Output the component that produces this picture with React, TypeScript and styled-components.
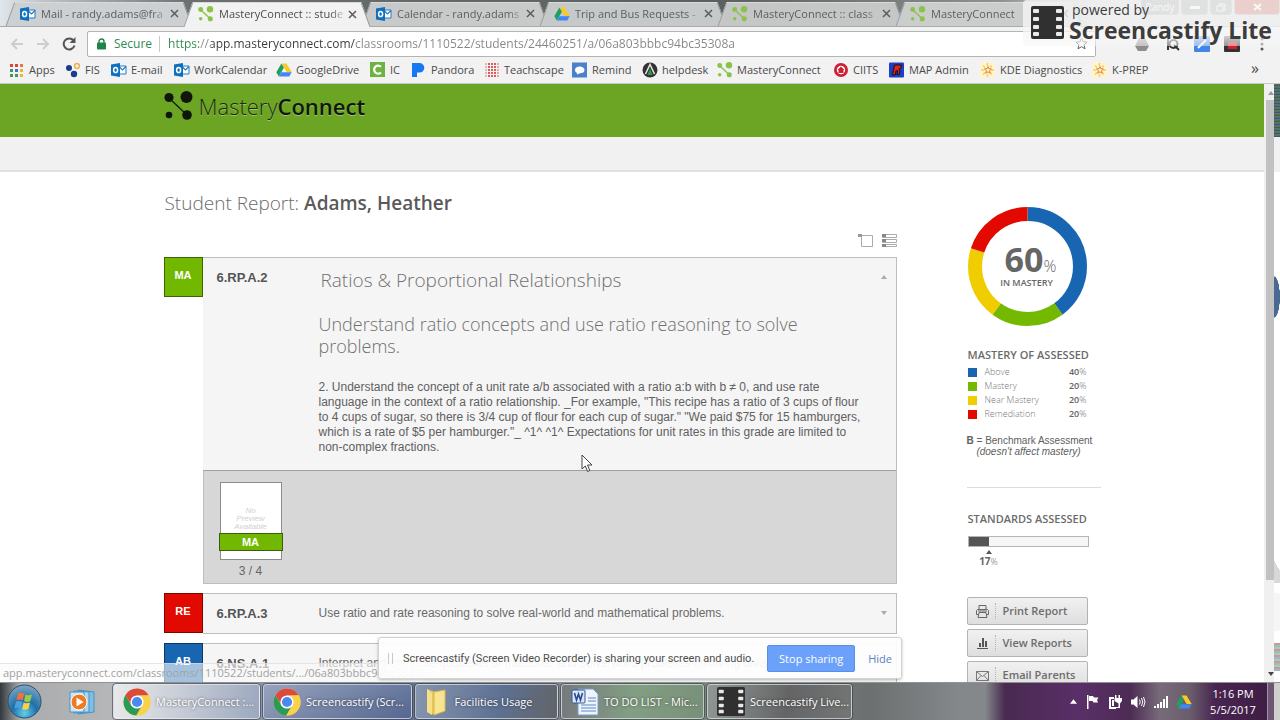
import React from "react";
import styled, { createGlobalStyle, css } from "styled-components";

const ui = `"Open Sans", "Noto Sans", sans-serif`;
const arial = `"Liberation Sans", Arial, sans-serif`;

const Global = createGlobalStyle`
  * { box-sizing: border-box; }
  body { margin: 0; font-family: ${ui}; overflow: hidden; }
  button { font: inherit; color: inherit; background: none; border: 0; padding: 0; margin: 0; cursor: pointer; }
  a { color: inherit; text-decoration: none; }
  svg { display: block; flex: none; }
  h1, h2, h3, p { margin: 0; font-weight: normal; }
`;

/* ---------- shell ---------- */
const Screen = styled.div`
  position: relative;
  display: flex;
  flex-direction: column;
  height: 100vh;
  overflow: hidden;
  background: #fff;
`;

/* ---------- tab strip ---------- */
const TabStrip = styled.div`
  display: flex;
  height: 27px;
  padding-left: 10px;
  background: linear-gradient(90deg, #dfe6ec 0, #c3c6c8 40px, #6b706f 190px, #59605e 720px, #8d9291 1000px, #d5d5d5 1100px);
  border-bottom: 1px solid #a9abab;
`;
const tabEdge = css`
  content: "";
  position: absolute;
  top: 2px;
  bottom: 0;
  width: 60%;
  z-index: -1;
`;
const TabBox = styled.div<{ $active?: boolean; $tint: string }>`
  position: relative;
  z-index: ${(p) => (p.$active ? 2 : 1)};
  display: flex;
  align-items: center;
  flex: 0 0 178px;
  min-width: 0;
  gap: 5px;
  height: ${(p) => (p.$active ? "27px" : "26px")};
  padding: 1px 9px 0 10px;
  color: ${(p) => (p.$active ? "#4c4c4c" : "#5b5e60")};
  isolation: isolate;
  &::before {
    ${tabEdge}
    left: 0;
    transform: skewX(-20deg);
    background: ${(p) => p.$tint};
    border-left: 1px solid #9b9d9e;
    border-top: 1px solid #d9dbdb;
  }
  &::after {
    ${tabEdge}
    right: 0;
    transform: skewX(20deg);
    background: ${(p) => p.$tint};
    border-right: 1px solid #8f9192;
    border-top: 1px solid #d9dbdb;
  }
`;
const TabTitle = styled.button`
  flex: 1;
  min-width: 0;
  overflow: hidden;
  white-space: nowrap;
  text-align: left;
  font-size: 11px;
  line-height: 18px;
  mask-image: linear-gradient(90deg, #000 90%, rgba(0, 0, 0, 0.25));
`;
const CloseButton = styled.button`
  padding: 3px 0;
`;
const WindowControls = styled.div`
  display: flex;
  align-items: flex-start;
  gap: 2px;
  margin-left: auto;
`;
const WindowButton = styled.button<{ $w: number; $close?: boolean }>`
  display: flex;
  align-items: center;
  justify-content: center;
  width: ${(p) => p.$w}px;
  height: 15px;
  color: #fff;
  font-size: 10px;
  border: 1px solid #a5a5a5;
  border-top: 0;
  border-radius: 0 0 4px 4px;
  background: ${(p) => (p.$close ? "#c4453a" : "#8f9393")};
`;

/* ---------- toolbar ---------- */
const Toolbar = styled.div`
  display: flex;
  align-items: center;
  height: 31px;
  padding: 2px 8px 0 4px;
  background: #f2f2f2;
`;
const NavButton = styled.button`
  display: flex;
  width: 26px;
  justify-content: center;
`;
const Omnibox = styled.label`
  display: flex;
  align-items: center;
  flex: 1;
  height: 26px;
  margin-left: 5px;
  padding: 0 7px 0 9px;
  background: #fff;
  border: 1px solid #b4b4b4;
  border-radius: 2px;
`;
const Secure = styled.span`
  padding: 0 7px 0 8px;
  margin-right: 8px;
  border-right: 1px solid #c8c8c8;
  color: #2f8a52;
  font-size: 12px;
  line-height: 16px;
`;
const UrlInput = styled.input`
  flex: 1;
  min-width: 0;
  padding: 0;
  border: 0;
  outline: 0;
  font: 12px/18px ${ui};
  color: #777;
  background: linear-gradient(90deg, #2f8a52 0 31px, #8b8b8b 31px 43px, #3a3a3a 43px 187px, #858585 187px);
  background-clip: text;
  -webkit-background-clip: text;
  -webkit-text-fill-color: transparent;
`;
const Extensions = styled.div`
  display: flex;
  gap: 14px;
  padding-left: 38px;
  width: 176px;
`;

/* ---------- bookmarks ---------- */
const Bookmarks = styled.nav`
  display: flex;
  align-items: center;
  height: 26px;
  padding: 0 0 2px 9px;
  background: #f2f2f2;
  border-bottom: 1px solid #c9c9c9;
  font-size: 11px;
  color: #4a4a4a;
`;
const Bookmark = styled.a<{ $w: number }>`
  display: flex;
  align-items: center;
  gap: 4px;
  flex: 0 0 ${(p) => p.$w}px;
  white-space: nowrap;
`;
const MoreButton = styled.button`
  margin: 0 21px 3px auto;
  font-size: 16px;
  line-height: 16px;
`;

/* ---------- recorder watermark ---------- */
const Watermark = styled.div`
  position: absolute;
  z-index: 5;
  top: 0;
  right: 0;
  display: flex;
  align-items: flex-start;
  gap: 5px;
  width: 257px;
  height: 46px;
  padding: 0 0 0 8px;
  overflow: hidden;
  background: linear-gradient(rgba(246, 246, 246, 0.78) 80%, rgba(246, 246, 246, 0.5));
  border-radius: 4px 0 0 4px;
  color: #3c3c3c;
  white-space: nowrap;
`;
const WatermarkIcon = styled.div`
  padding-top: 6px;
`;
const WatermarkText = styled.div`
  padding-left: 3px;
  font-size: 14px;
  line-height: 20px;
`;
const WatermarkName = styled.strong`
  display: block;
  margin-left: -3px;
  font-size: 23px;
`;

/* ---------- page ---------- */
const Viewport = styled.div`
  position: relative;
  display: flex;
  flex: 1;
  min-height: 0;
  overflow: hidden;
`;
const Page = styled.div`
  flex: 1;
  min-width: 0;
  overflow: hidden;
  background: #fff;
`;
const Container = styled.div`
  max-width: 937px;
  margin: 0 auto;
`;
const Header = styled.header`
  height: 53px;
  padding-top: 7px;
  background: #6ca424;
`;
const Brand = styled.a`
  display: flex;
  align-items: center;
  gap: 5px;
  font-family: ${ui};
  font-size: 22px;
  line-height: 30px;
  font-weight: 300;
  color: #1c2b0c;
  text-shadow: 0 1px 0 rgba(255, 255, 255, 0.35);
  b { font-weight: 600; color: #10170a; }
`;
const SubBar = styled.div`
  height: 35px;
  background: #f1f1f1;
  border-bottom: 2px solid #e0e0e0;
`;
const Columns = styled(Container)`
  display: flex;
  gap: 70px;
`;
const Main = styled.main`
  flex: 1;
  min-width: 0;
`;
const Aside = styled.aside`
  flex: 0 0 134px;
  padding-top: 35px;
  color: #666;
`;
const ReportTitle = styled.h1`
  padding: 18px 0 0 1px;
  font-size: 19px;
  line-height: 26px;
  font-weight: 300;
  color: #6b6b6b;
  b { font-weight: 600; color: #5a5a5a; }
`;
const ViewSwitch = styled.div`
  display: flex;
  justify-content: flex-end;
  gap: 9px;
  padding: 17px 0 9px;
`;
const Standards = styled.div`
  display: flex;
  flex-direction: column;
  gap: 9px;
`;
const Standard = styled.section`
  display: flex;
  align-items: flex-start;
  font-family: ${arial};
`;
const Level = styled.div<{ $color: string }>`
  flex: 0 0 39px;
  height: 40px;
  background: ${(p) => p.$color};
  border: 1px solid rgba(0, 0, 0, 0.45);
  color: #fff;
  font-size: 11px;
  font-weight: 700;
  line-height: 35px;
  text-align: center;
`;
const Panel = styled.div`
  flex: 1;
  min-width: 0;
  background: #f5f5f5;
  border: 1px solid #bdbdbd;
  border-left: 0;
`;
const PanelHead = styled.div`
  display: grid;
  grid-template-columns: 102px 1fr 16px;
  padding: 0 4px 0 14px;
  min-height: 38px;
`;
const Code = styled.strong`
  font-size: 13px;
  line-height: 39px;
  color: #555;
`;
const Summary = styled.p`
  font-size: 12px;
  line-height: 39px;
  color: #6a6a6a;
  white-space: nowrap;
  overflow: hidden;
`;
const Toggle = styled.button`
  display: flex;
  justify-content: center;
  height: 38px;
  align-items: center;
`;
const Detail = styled.div`
  padding: 10px 0 15px;
`;
const Domain = styled.h2`
  padding-left: 2px;
  font: 300 19px/24px ${ui};
  color: #707070;
`;
const Cluster = styled.h3`
  margin: 21px 0 23px;
  font: 300 18px/22px ${ui};
  color: #707070;
`;
const Statement = styled.p`
  max-width: 550px;
  font-size: 12px;
  line-height: 15px;
  color: #606060;
`;
const Assessments = styled.div`
  padding: 11px 0 2px 16px;
  background: #d7d7d7;
  border-top: 1px solid #9f9f9f;
  border-left: 1px solid #bdbdbd;
`;
const Assessment = styled.a`
  display: block;
  width: 62px;
  text-align: center;
`;
const Thumb = styled.span`
  display: block;
  height: 78px;
  padding-top: 24px;
  background: #fff;
  border: 1px solid #8c8c8c;
  font-size: 8px;
  line-height: 8px;
  font-style: italic;
  color: #d0d0d0;
`;
const ThumbLevel = styled.span`
  display: block;
  margin: 2px -2px 0;
  border: 1px solid #3c5a10;
  background: #72b800;
  color: #fff;
  font: 700 11px/16px ${arial};
`;
const Score = styled.span`
  display: block;
  padding-top: 1px;
  font-size: 12px;
  line-height: 20px;
  color: #666;
`;

/* ---------- sidebar ---------- */
const Donut = styled.div`
  position: relative;
  width: 120px;
`;
const DonutLabel = styled.div`
  position: absolute;
  inset: 34px 0 auto 0;
  text-align: center;
  font-size: 9px;
  line-height: 12px;
  font-weight: 600;
`;
const DonutValue = styled.div`
  margin-bottom: -7px;
  padding-left: 8px;
  font-size: 34px;
  line-height: 36px;
  font-weight: 700;
  span { font-size: 16px; font-weight: 300; }
`;
const AsideTitle = styled.h3`
  padding-left: 1px;
  font-size: 11px;
  line-height: 16px;
  font-weight: 600;
  color: #6b6b6b;
  white-space: nowrap;
`;
const LegendTitle = styled(AsideTitle)`
  margin-top: 20px;
`;
const Legend = styled.table`
  width: 119px;
  margin: 2px 0 0 1px;
  border-collapse: collapse;
  font-size: 9px;
  line-height: 14px;
  td, th { padding: 0; }
  th { text-align: left; font-weight: 300; color: #777; }
  td:first-child { width: 17px; }
  td:last-child { text-align: right; font-weight: 300; }
  b { font-weight: 600; }
`;
const Swatch = styled.span<{ $color: string }>`
  display: block;
  width: 9px;
  height: 9px;
  background: ${(p) => p.$color};
`;
const Note = styled.p`
  margin: 14px 0 30px;
  width: 124px;
  text-align: center;
  white-space: nowrap;
  font: 10px/11px ${arial};
  color: #606060;
`;
const Divider = styled.hr`
  margin: 0 0 23px;
  border: 0;
  border-top: 1px solid #dcdcdc;
`;
const Bar = styled.div`
  width: 121px;
  height: 11px;
  margin: 9px 0 2px 1px;
  background: #f6f6f6;
  border: 1px solid #b5b5b5;
`;
const BarFill = styled.div`
  height: 100%;
  background: #555;
`;
const BarMark = styled.div`
  display: flex;
  flex-direction: column;
  align-items: center;
  width: 44px;
  padding-top: 1px;
  font-size: 10px;
  line-height: 14px;
  span { font-weight: 300; font-size: 9px; }
`;
const Actions = styled.div`
  display: flex;
  flex-direction: column;
  gap: 4px;
  width: 121px;
  margin-top: 28px;
`;
const ActionButton = styled.button`
  display: flex;
  align-items: center;
  height: 28px;
  padding-left: 7px;
  border: 1px solid #b3b3b3;
  border-radius: 2px;
  background: linear-gradient(#f1f1f1, #dedede);
  font-size: 11px;
  font-weight: 600;
  color: #6d6d6d;
`;
const ActionText = styled.span`
  margin-left: 5px;
  padding-left: 7px;
  border-left: 1px dotted #b5b5b5;
  line-height: 16px;
`;

/* ---------- scrollbar and second display ---------- */
const Scrollbar = styled.div`
  display: flex;
  flex-direction: column;
  align-items: flex-end;
  justify-content: space-between;
  flex: 0 0 10px;
  padding: 7px 0 6px;
  background: #f0f0f0;
`;
const ScrollThumb = styled.div`
  flex: 0 1 82%;
  width: 8px;
  margin: 5px 0 auto;
  background: #c1c1c1;
`;
const NextScreen = styled.div`
  flex: 0 0 6px;
  display: flex;
  flex-direction: column;
  background: #fff;
`;
const Slice = styled.div<{ $h: number; $bg?: string }>`
  flex: 0 0 ${(p) => p.$h}px;
  background: ${(p) => p.$bg || "transparent"};
`;

/* ---------- overlays ---------- */
const StatusBubble = styled.div`
  position: absolute;
  left: 0;
  bottom: 0;
  width: 425px;
  height: 19px;
  padding-left: 3px;
  overflow: hidden;
  white-space: nowrap;
  background: rgba(250, 250, 250, 0.62);
  border-top: 1px solid rgba(220, 220, 220, 0.7);
  font-size: 11px;
  line-height: 18px;
  color: #a2a2a2;
`;
const SharePopup = styled.div`
  position: absolute;
  left: 50%;
  bottom: 3px;
  transform: translateX(-50%);
  display: flex;
  align-items: center;
  width: 524px;
  height: 42px;
  padding: 0 9px;
  background: rgba(253, 253, 253, 0.94);
  border: 1px solid #d2d2d2;
  border-radius: 3px;
  box-shadow: 0 1px 3px rgba(0, 0, 0, 0.25);
  font-size: 11px;
  color: #4d4d4d;
  white-space: nowrap;
`;
const Grip = styled.span`
  width: 5px;
  height: 11px;
  margin-right: 10px;
  border: solid #c8c8c8;
  border-width: 0 1px;
`;
const ShareText = styled.span`
  font-family: Roboto, ${ui};
`;
const StopButton = styled.button`
  width: 88px;
  height: 27px;
  margin-left: auto;
  background: #6ba1fa;
  border: 1px solid #5b8de0;
  border-radius: 2px;
  color: #fff;
`;
const HideLink = styled.button`
  margin-left: 13px;
  color: #5f7fc4;
`;
const Pointer = styled.div`
  position: absolute;
  z-index: 6;
  left: 581px;
  top: 454px;
`;

/* ---------- taskbar ---------- */
const Taskbar = styled.footer`
  display: flex;
  align-items: center;
  flex: 0 0 38px;
  padding-left: 7px;
  border-top: 1px solid #8f9193;
  color: #fff;
  font-size: 11px;
  background: linear-gradient(90deg, #33373b 0, #a9abad 20px, #b4b6b8 110px, #8b93a6 260px, #63718f 420px, #7d848c 560px, #7c8e7c 640px, #76807a 760px, #6d7071 870px, #85888a 960px, #85888a 985px, #482a50 1005px, #5a2f68 1080px, #4c2c54 1130px, #776b79 1160px, #6a5d6c 1190px, #482550 1215px, #3c1c42 100%);
`;
const TaskSlot = styled.button<{ $ml?: number }>`
  margin-left: ${(p) => p.$ml || 0}px;
`;
const TaskButtons = styled.div`
  display: flex;
  gap: 3px;
  margin-left: 18px;
`;
const TaskButton = styled.button<{ $w: number; $bg: string }>`
  display: flex;
  align-items: center;
  gap: 5px;
  width: ${(p) => p.$w}px;
  height: 35px;
  padding-left: 9px;
  border: 1px solid rgba(235, 240, 245, 0.65);
  border-radius: 3px;
  outline: 1px solid rgba(40, 45, 55, 0.5);
  background: ${(p) => p.$bg};
  white-space: nowrap;
  text-shadow: 0 0 3px rgba(0, 0, 0, 0.6);
`;
const TaskLabel = styled.span<{ $center?: boolean }>`
  flex: 1;
  padding-right: ${(p) => (p.$center ? "22px" : "0")};
  text-align: ${(p) => (p.$center ? "center" : "left")};
`;
const Tray = styled.div`
  display: flex;
  align-items: center;
  gap: 7px;
  margin-left: auto;
`;
const Clock = styled.time`
  width: 68px;
  margin-right: -7px;
  text-align: center;
  font-size: 11px;
  line-height: 16px;
`;
const ShowDesktop = styled.button`
  width: 13px;
  height: 37px;
  border-left: 1px solid #a492a8;
  background: linear-gradient(90deg, rgba(255, 255, 255, 0.25) 6px, #cfcfcf 6px);
`;

/* ---------- drawings ---------- */
const Outlook = () => (
  <svg width="16" height="16" viewBox="0 0 16 16">
    <path d="M8 4h7v8H8z" fill="#fff" stroke="#1e7ac8" />
    <path d="M8.500 5l3 3 3.500-3.500" fill="none" stroke="#1e7ac8" strokeWidth="1.200" />
    <path d="M0 2.500L9 1v14L0 13.500z" fill="#0f6fc0" />
    <ellipse cx="4.600" cy="8" rx="2" ry="2.600" fill="none" stroke="#fff" strokeWidth="1.500" />
  </svg>
);
const Mastery = ({ size = 16, color = "#8cc24a" }) => (
  <svg width={size} height={size} viewBox="0 0 30 30" fill={color}>
    <path d="M5 7l18 17" stroke={color} strokeWidth={size > 20 ? 1.2 : 2.5} />
    <circle cx="5" cy="6.500" r="4.600" />
    <circle cx="22.500" cy="6" r="6" />
    <circle cx="5" cy="24" r="3.300" />
    <circle cx="23" cy="24" r="4.800" />
  </svg>
);
const Drive = () => (
  <svg width="16" height="16" viewBox="0 0 16 16">
    <path d="M5.500 1.500h5L15.700 10h-5z" fill="#fbc926" />
    <path d="M5.400 1.600L.3 10.200l2.500 4.300 5.100-8.700z" fill="#1fa15d" />
    <path d="M5.400 10.300h10.300l-2.500 4.200H2.900z" fill="#4285f4" />
  </svg>
);
const AppsGrid = () => (
  <svg width="16" height="16" viewBox="0 0 16 16">
    {["#d9453b", "#d9453b", "#e0793b", "#3a9a57", "#3f74c9", "#e8b53a", "#3a9a57", "#3a9a57", "#e8b53a"].map((c, i) => (
      <rect key={i} x={1 + (i % 3) * 5} y={2 + Math.floor(i / 3) * 5} width="3" height="3" fill={c} />
    ))}
  </svg>
);
const Fis = () => (
  <svg width="16" height="16" viewBox="0 0 16 16" fill="#1a3c8f">
    <circle cx="4" cy="6" r="3" />
    <circle cx="9" cy="12" r="3.200" />
    <circle cx="12" cy="4" r="2.400" fill="none" stroke="#eeb04a" strokeWidth="1.500" />
  </svg>
);
const Campus = () => (
  <svg width="16" height="16" viewBox="0 0 16 16">
    <rect width="15" height="15" fill="#6cb33f" />
    <path d="M11 4.800a4 4 0 1 0 0 5.600" fill="none" stroke="#fff" strokeWidth="2.200" />
  </svg>
);
const Pandora = () => (
  <svg width="16" height="16" viewBox="0 0 16 16">
    <path d="M1 1h7.500a4.700 4.700 0 0 1 0 9.600H6V15H1z" fill="#1779f2" />
  </svg>
);
const Teach = () => (
  <svg width="16" height="16" viewBox="0 0 16 16">
    {Array.from({ length: 25 }, (_, i) => (
      <rect key={i} x={1 + (i % 5) * 3} y={1 + Math.floor(i / 5) * 3} width="2" height="2" fill="#d94b4b" opacity={i % 5 === 0 ? 0.35 : i % 5 === 4 ? 0.45 : 0.9} />
    ))}
  </svg>
);
const Remind = () => (
  <svg width="16" height="16" viewBox="0 0 16 16">
    <rect width="15" height="15" y=".5" fill="#4a80cc" />
    <path d="M3 8c0-2.200 2-3.500 4.500-3.500S12.500 5.800 12.500 8s-2 3.300-4.500 3.300L5 12.500V11C3.800 10.400 3 9.500 3 8z" fill="#fff" />
  </svg>
);
const Helpdesk = () => (
  <svg width="16" height="16" viewBox="0 0 16 16">
    <circle cx="8" cy="8" r="7.500" fill="#333" />
    <path d="M3.500 12L8 2.500 12.500 12" fill="none" stroke="#e8e8e8" strokeWidth="1.500" />
    <path d="M8 6l2.500 7h-5z" fill="#2f9a4c" />
  </svg>
);
const Ciits = () => (
  <svg width="16" height="16" viewBox="0 0 16 16">
    <circle cx="8" cy="8" r="5.600" fill="#fff" stroke="#d01f35" strokeWidth="2.800" />
    <path d="M8 4.500l3.500 3.500H10.500v3h-5V8h-1z" fill="#d01f35" />
  </svg>
);
const MapAdmin = () => (
  <svg width="16" height="16" viewBox="0 0 16 16">
    <rect width="15" height="15" y=".5" rx="1" fill="#1d3fc4" />
    <path d="M5.500 3h7l-.7 3.200-2 1.300 1.200 1-.8 4H8l.7-3.700H7L6.300 13H3.500z" fill="#e2231a" stroke="#111" />
  </svg>
);
const Kde = () => (
  <svg width="16" height="16" viewBox="0 0 16 16">
    <rect width="15" height="15" y=".5" fill="#fdf5cf" />
    <path d="M7.500 1v3M7.500 12v3M1 8h3M11 8h3M3 3.500l2 2M12 3.500l-2 2M3 12.500l2-2M12 12.500l-2-2" stroke="#f3cf55" strokeWidth="1.500" />
    <path d="M8 4.500l1 2.300 2.500.2-2 1.700.7 2.500L8 9.800l-2.300 1.400.7-2.500-2-1.700 2.600-.2z" fill="#fdf5cf" stroke="#e0813a" />
  </svg>
);
const Cross = () => (
  <svg width="9" height="9" viewBox="0 0 9 9" stroke="#5c5c5c" strokeWidth="1.500">
    <path d="M1 1l7 7M8 1L1 8" />
  </svg>
);
const Film = ({ w = 33, h = 33 }) => (
  <svg width={w} height={h} viewBox="0 0 33 33" preserveAspectRatio="none">
    <rect width="33" height="33" rx="2" fill="#303030" />
    {[3, 11, 19, 26].map((y) => (
      <g key={y} fill="#e9e9e9">
        <rect x="2" y={y} width="6" height="4" rx="1" />
        <rect x="25" y={y} width="6" height="4" rx="1" />
      </g>
    ))}
  </svg>
);
const Chrome = () => (
  <svg width="28" height="28" viewBox="0 0 28 28">
    <circle cx="14" cy="14" r="13.500" fill="#fcd14a" />
    <path d="M2.300 7.300A13.500 13.500 0 0 1 25.700 7.300L14 7.800 9 17.500z" fill="#dc4a3d" />
    <path d="M2.300 7.200A13.500 13.500 0 0 0 13.300 27.500L19.600 17 8.600 17.500z" fill="#2a9a55" />
    <path d="M14 7.500h11.800A13.500 13.500 0 0 1 13.300 27.500L19.500 17z" fill="#fcd14a" />
    <circle cx="14" cy="14" r="6.600" fill="#fff" />
    <circle cx="14" cy="14" r="5.100" fill="#4a8af0" />
  </svg>
);
const StartOrb = () => (
  <svg width="35" height="35" viewBox="0 0 35 35">
    <defs>
      <radialGradient id="orb" cx=".5" cy=".85" r=".85">
        <stop offset="0" stopColor="#5fd0ee" />
        <stop offset=".45" stopColor="#1f6fa8" />
        <stop offset="1" stopColor="#7fa8c4" />
      </radialGradient>
    </defs>
    <circle cx="17.500" cy="17.500" r="16.500" fill="url(#orb)" stroke="#2f4f68" />
    <path d="M11 9.500c2.200-1 4.200-.9 6.200.2l-1.500 6.600c-2-1.100-4-1.200-6.300-.2z" fill="#f0713a" />
    <path d="M18.500 10.500c2.200 1.100 4.200 1.100 6.500.1l-1.700 6.600c-2.200 1-4.200.9-6.300-.2z" fill="#9ccb46" />
    <path d="M9 17.600c2.200-1 4.200-.9 6.300.2l-1.600 6.500c-2-1.100-4-1.200-6.300-.2z" fill="#4fa0e0" />
    <path d="M16.600 18.500c2.100 1.100 4.200 1.100 6.400.1l-1.600 6.500c-2.200 1-4.200.9-6.300-.2z" fill="#fbd045" />
  </svg>
);
const MediaPlayer = () => (
  <svg width="26" height="26" viewBox="0 0 26 26">
    <path d="M9 1l16 2v20L9 25z" fill="#7fbfe6" stroke="#4a90c0" />
    <path d="M5 2l15 1v20L5 24z" fill="#a9d8f2" stroke="#4a90c0" />
    <path d="M1 3h14v20H1z" fill="#c5e6f7" stroke="#4a90c0" />
    <circle cx="10" cy="13" r="8" fill="#ef7a22" stroke="#fff" />
    <path d="M7.500 8.500l7 4.500-7 4.500z" fill="#fff" />
  </svg>
);
const Folder = () => (
  <svg width="22" height="30" viewBox="0 0 22 30">
    <path d="M2 2l8 3v23L2 25z" fill="#e6c75c" />
    <path d="M9 5l11-2v21L9 28z" fill="#f8e491" stroke="#d9b84a" />
    <path d="M2 2l5 4v22l-5-3z" fill="#f6df86" />
  </svg>
);
const Word = () => (
  <svg width="28" height="28" viewBox="0 0 28 28">
    <path d="M7 1h15l5 5v21H7z" fill="#eef4fc" stroke="#7b9ccc" />
    <path d="M17 10h8M17 13h8M10 17h15M10 20h15M10 23h15" stroke="#5f87c4" />
    <rect x="1" y="2" width="13" height="13" rx="1" fill="#dbe7f7" stroke="#36589b" />
    <path d="M3.500 5l2 7 2-6 2 6 2-7" fill="none" stroke="#274a90" strokeWidth="1.600" />
  </svg>
);
const Triangle = ({ down, color = "#aaa", size = 6 }: { down?: boolean; color?: string; size?: number }) => (
  <svg width={size} height={size - 2} viewBox="0 0 6 4" fill={color}>
    <path d={down ? "M0 0h6L3 4z" : "M0 4h6L3 0z"} />
  </svg>
);
const Printer = () => (
  <svg width="15" height="13" viewBox="0 0 15 13" fill="none" stroke="#666">
    <path d="M4 4V.5h7V4M3.500 9.500h-2v-4l1-1h10l1 1v4h-2M4 7.500h7l1 5H3zM3 6h9" />
  </svg>
);
const Chart = () => (
  <svg width="15" height="13" viewBox="0 0 15 13" stroke="#555">
    <path d="M2 11.500h11" />
    <path d="M5 10V6M8 10V1M11 10V4" strokeWidth="2" />
  </svg>
);
const Envelope = () => (
  <svg width="15" height="13" viewBox="0 0 15 13" fill="none" stroke="#777">
    <path d="M1.500 2.500h12v9h-12zM1.500 2.500l6 5 6-5M1.500 11.500L6 6.500M13.500 11.500L9 6.500" />
  </svg>
);

/* ---------- data ---------- */
const tabs = [
  { title: "Mail - randy.adams@fra", icon: <Outlook />, tint: "#cdd0d2" },
  { title: "MasteryConnect :: stude", icon: <Mastery />, tint: "#f2f2f2", active: true },
  { title: "Calendar - randy.adams", icon: <Outlook />, tint: "#c8caca" },
  { title: "Trip and Bus Requests -", icon: <Drive />, tint: "#c6c9c9" },
  { title: "MasteryConnect :: class", icon: <Mastery />, tint: "#c4c7c6" },
  { title: "MasteryConnect", icon: <Mastery />, tint: "#cbcdcd" },
];
const bookmarks = [
  { label: "Apps", w: 56, icon: <AppsGrid /> },
  { label: "FIS", w: 46, icon: <Fis /> },
  { label: "E-mail", w: 63, icon: <Outlook /> },
  { label: "WorkCalendar", w: 102, icon: <Outlook /> },
  { label: "GoogleDrive", w: 94, icon: <Drive /> },
  { label: "IC", w: 41, icon: <Campus /> },
  { label: "Pandora", w: 73, icon: <Pandora /> },
  { label: "Teachscape", w: 88, icon: <Teach /> },
  { label: "Remind", w: 70, icon: <Remind /> },
  { label: "helpdesk", w: 75, icon: <Helpdesk /> },
  { label: "MasteryConnect", w: 116, icon: <Mastery /> },
  { label: "CIITS", w: 56, icon: <Ciits /> },
  { label: "MAP Admin", w: 91, icon: <MapAdmin /> },
  { label: "KDE Diagnostics", w: 112, icon: <Kde /> },
  { label: "K-PREP", w: 60, icon: <Kde /> },
];
const levels = [
  { name: "Above", value: 40, color: "#1866b2" },
  { name: "Mastery", value: 20, color: "#74b800" },
  { name: "Near Mastery", value: 20, color: "#f0cd00" },
  { name: "Remediation", value: 20, color: "#e20a00" },
];
const offsetOf = (i: number) => levels.slice(0, i).reduce((sum, l) => sum + l.value, 0);

const Row = ({ level, color, code, text }: { level: string; color: string; code: string; text: string }) => (
  <Standard>
    <Level $color={color}>{level}</Level>
    <Panel>
      <PanelHead>
        <Code>{code}</Code>
        <Summary>{text}</Summary>
        <Toggle aria-label={`Expand ${code}`}><Triangle down /></Toggle>
      </PanelHead>
    </Panel>
  </Standard>
);

export default function App() {
  return (
    <Screen>
      <Global />
      <TabStrip>
        {tabs.map((t, i) => (
          <TabBox key={i} $active={t.active} $tint={t.tint}>
            {t.icon}
            <TabTitle>{t.title}</TabTitle>
            <CloseButton aria-label="Close tab"><Cross /></CloseButton>
          </TabBox>
        ))}
        <WindowControls>
          <WindowButton $w={38}>Randy</WindowButton>
          <WindowButton $w={27} aria-label="Minimize">
            <svg width="10" height="3"><rect width="10" height="3" fill="#fff" /></svg>
          </WindowButton>
          <WindowButton $w={22} aria-label="Restore">
            <svg width="10" height="9" fill="none" stroke="#fff"><path d="M3 3V1h6v6H7M1 3h6v5H1z" /></svg>
          </WindowButton>
          <WindowButton $w={46} $close aria-label="Close">
            <svg width="9" height="8" stroke="#fff" strokeWidth="2"><path d="M1 1l7 6M8 1L1 7" /></svg>
          </WindowButton>
        </WindowControls>
      </TabStrip>

      <Toolbar>
        <NavButton aria-label="Back">
          <svg width="14" height="14" fill="none" stroke="#cdcdcd" strokeWidth="2"><path d="M13 7H2M7 2L2 7l5 5" /></svg>
        </NavButton>
        <NavButton aria-label="Forward">
          <svg width="14" height="14" fill="none" stroke="#cdcdcd" strokeWidth="2"><path d="M1 7h11M7 2l5 5-5 5" /></svg>
        </NavButton>
        <NavButton aria-label="Reload">
          <svg width="14" height="14" fill="none" stroke="#555" strokeWidth="2">
            <path d="M11.500 3.500A5.500 5.500 0 1 0 12.500 8.500" />
            <path d="M13.500 0v6h-6z" fill="#555" stroke="none" />
          </svg>
        </NavButton>
        <Omnibox>
          <svg width="9" height="12" viewBox="0 0 9 12">
            <path d="M2 5V3.500a2.500 2.500 0 0 1 5 0V5" fill="none" stroke="#1f8447" strokeWidth="1.400" />
            <rect y="4.500" width="9" height="7" rx="1" fill="#1f8447" />
          </svg>
          <Secure>Secure</Secure>
          <UrlInput
            aria-label="Address"
            defaultValue="https://app.masteryconnect.com/classrooms/1110522/students/24460251/a/06a803bbbc94bc35308a"
          />
          <svg width="13" height="13" viewBox="0 0 13 13" fill="none" stroke="#666">
            <path d="M6.500 1l1.600 3.700 4 .4-3 2.700.9 4-3.500-2.100L3 11.800l.9-4-3-2.700 4-.4z" />
          </svg>
        </Omnibox>
        <Extensions>
          <svg width="16" height="16"><path d="M5 2h6l4 8-3 5H4l-3-5z" fill="#8d8d8d" /></svg>
          <svg width="16" height="16" fill="none" stroke="#333" strokeWidth="2"><path d="M4 2v12" /><circle cx="9.500" cy="8" r="4" /><path d="M10 9l5 5" /></svg>
          <svg width="16" height="16"><rect width="16" height="16" rx="1" fill="#4285e8" /><path d="M4 12l8-8" stroke="#fff" strokeWidth="2" /></svg>
          <svg width="16" height="16"><rect width="16" height="16" rx="1" fill="#333" /><rect x="4" y="6" width="9" height="7" fill="#d0202a" /></svg>
          <svg width="16" height="16" fill="#555"><circle cx="8" cy="3" r="1.500" /><circle cx="8" cy="8" r="1.500" /><circle cx="8" cy="13" r="1.500" /></svg>
        </Extensions>
      </Toolbar>

      <Bookmarks>
        {bookmarks.map((b) => (
          <Bookmark key={b.label} href="#" $w={b.w}>{b.icon}{b.label}</Bookmark>
        ))}
        <MoreButton aria-label="More bookmarks">»</MoreButton>
      </Bookmarks>

      <Watermark>
        <WatermarkIcon><Film /></WatermarkIcon>
        <WatermarkText>
          powered by
          <WatermarkName>Screencastify Lite</WatermarkName>
        </WatermarkText>
      </Watermark>

      <Viewport>
        <Page>
          <Header>
            <Container>
              <Brand href="#">
                <Mastery size={30} color="#10170a" />
                <span>Mastery<b>Connect</b></span>
              </Brand>
            </Container>
          </Header>
          <SubBar />
          <Columns>
            <Main>
              <ReportTitle>Student Report: <b>Adams, Heather</b></ReportTitle>
              <ViewSwitch>
                <button aria-label="Card view">
                  <svg width="15" height="15" fill="none" stroke="#ababab"><path d="M3.500 2.500h11v11h-11z" /><path d="M0 1h4v3H0z" fill="#999" stroke="none" /></svg>
                </button>
                <button aria-label="List view">
                  <svg width="15" height="15" fill="none" stroke="#ababab">
                    <path d="M.5 1.500h14v3H.5zM.5 6.500h14v3H.5zM.5 11.500h14v2H.5z" />
                    <path d="M0 1h4v3H0zM0 6h4v3H0zM0 11h4v3H0z" fill="#888" stroke="none" />
                  </svg>
                </button>
              </ViewSwitch>
              <Standards>
                <Standard>
                  <Level $color="#72b800">MA</Level>
                  <Panel>
                    <PanelHead>
                      <Code>6.RP.A.2</Code>
                      <Detail>
                        <Domain>Ratios &amp; Proportional Relationships</Domain>
                        <Cluster>Understand ratio concepts and use ratio reasoning to solve problems.</Cluster>
                        <Statement>
                          2. Understand the concept of a unit rate a/b associated with a ratio a:b with b ≠ 0, and use rate
                          language in the context of a ratio relationship. _For example, "This recipe has a ratio of 3 cups of
                          flour to 4 cups of sugar, so there is 3/4 cup of flour for each cup of sugar." "We paid $75 for 15
                          hamburgers, which is a rate of $5 per hamburger."_ ^1^ ^1^ Expectations for unit rates in this grade
                          are limited to non-complex fractions.
                        </Statement>
                      </Detail>
                      <Toggle aria-label="Collapse 6.RP.A.2"><Triangle /></Toggle>
                    </PanelHead>
                    <Assessments>
                      <Assessment href="#">
                        <Thumb>
                          No<br />Preview<br />Available
                          <ThumbLevel>MA</ThumbLevel>
                        </Thumb>
                        <Score>3 / 4</Score>
                      </Assessment>
                    </Assessments>
                  </Panel>
                </Standard>
                <Row level="RE" color="#e20a00" code="6.RP.A.3" text="Use ratio and rate reasoning to solve real-world and mathematical problems." />
                <Row level="AB" color="#1866b2" code="6.NS.A.1" text="Interpret and compute quotients of fractions, and solve word problems involving division" />
              </Standards>
            </Main>
            <Aside>
              <Donut>
                <svg width="120" height="120" viewBox="0 0 120 120" fill="none" strokeWidth="14">
                  {levels.map((l, i) => (
                    <circle
                      key={l.name}
                      cx="60.500"
                      cy="59.500"
                      r="52.500"
                      stroke={l.color}
                      pathLength="100"
                      strokeDasharray={`${l.value} ${100 - l.value}`}
                      strokeDashoffset={25 - offsetOf(i)}
                    />
                  ))}
                </svg>
                <DonutLabel>
                  <DonutValue>60<span>%</span></DonutValue>
                  IN MASTERY
                </DonutLabel>
              </Donut>
              <LegendTitle>MASTERY OF ASSESSED</LegendTitle>
              <Legend>
                <tbody>
                  {levels.map((l) => (
                    <tr key={l.name}>
                      <td><Swatch $color={l.color} /></td>
                      <th scope="row">{l.name}</th>
                      <td><b>{l.value}</b>%</td>
                    </tr>
                  ))}
                </tbody>
              </Legend>
              <Note><b>B</b> = Benchmark Assessment<br /><i>(doesn't affect mastery)</i></Note>
              <Divider />
              <AsideTitle>STANDARDS ASSESSED</AsideTitle>
              <Bar><BarFill style={{ width: "17%" }} /></Bar>
              <BarMark>
                <Triangle color="#555" />
                <div><b>17</b><span>%</span></div>
              </BarMark>
              <Actions>
                <ActionButton><Printer /><ActionText>Print Report</ActionText></ActionButton>
                <ActionButton><Chart /><ActionText>View Reports</ActionText></ActionButton>
                <ActionButton><Envelope /><ActionText>Email Parents</ActionText></ActionButton>
              </Actions>
            </Aside>
          </Columns>
        </Page>
        <Scrollbar>
          <Triangle color="#999" />
          <ScrollThumb />
          <Triangle down color="#444" />
        </Scrollbar>
        <NextScreen>
          <Slice $h={53} $bg="repeating-linear-gradient(#4d7a3c 0 1px, #5a4a70 1px 2px, #447a88 2px 3px)" />
          <Slice $h={35} $bg="#f1f1f1" />
          <Slice $h={104} />
          <Slice $h={42} $bg="radial-gradient(ellipse 6px 21px at 0 50%, #4a6a94 96%, #fff)" />
          <Slice $h={238} />
          <Slice $h={27} $bg="linear-gradient(60deg, #d8d8d8 60%, #fff 60%)" />
          <Slice $h={10} />
          <Slice $h={38} $bg="#f5f5f5" />
          <Slice $h={12} />
          <Slice $h={28} $bg="repeating-linear-gradient(#c99 0 2px, #9bc 2px 4px, #aca 4px 6px)" />
        </NextScreen>
        <StatusBubble>app.masteryconnect.com/classrooms/1110522/students/.../06a803bbbc94bc35308a</StatusBubble>
        <SharePopup role="dialog" aria-label="Screen sharing">
          <Grip />
          <ShareText>Screencastify (Screen Video Recorder) is sharing your screen and audio.</ShareText>
          <StopButton>Stop sharing</StopButton>
          <HideLink>Hide</HideLink>
        </SharePopup>
      </Viewport>

      <Pointer>
        <svg width="12" height="19" viewBox="0 0 12 19">
          <path d="M1 1v14l3.300-3 2.300 5.500 2.200-1L6.500 11H11z" fill="#fff" stroke="#444" />
        </svg>
      </Pointer>

      <Taskbar>
        <TaskSlot aria-label="Start"><StartOrb /></TaskSlot>
        <TaskSlot aria-label="Media player" $ml={27}><MediaPlayer /></TaskSlot>
        <TaskButtons>
          <TaskButton $w={147} $bg="linear-gradient(100deg, rgba(255,255,255,.7), rgba(170,185,210,.55))"><Chrome /><TaskLabel>MasteryConnect :...</TaskLabel></TaskButton>
          <TaskButton $w={149} $bg="linear-gradient(160deg, rgba(160,175,205,.6), rgba(75,95,145,.6))"><Chrome /><TaskLabel>Screencastify (Scr...</TaskLabel></TaskButton>
          <TaskButton $w={143} $bg="linear-gradient(100deg, rgba(170,185,205,.5), rgba(80,105,150,.6) 60%, rgba(80,80,80,.6))"><Folder /><TaskLabel $center>Facilities Usage</TaskLabel></TaskButton>
          <TaskButton $w={143} $bg="linear-gradient(100deg, rgba(110,110,110,.5), rgba(135,170,135,.6) 50%, rgba(120,150,120,.6))"><Word /><TaskLabel>TO DO LIST - Mic...</TaskLabel></TaskButton>
          <TaskButton $w={145} $bg="linear-gradient(100deg, rgba(160,165,165,.6), rgba(90,85,90,.6) 55%, rgba(120,120,120,.6))"><Film w={28} h={29} /><TaskLabel>Screencastify Live...</TaskLabel></TaskButton>
        </TaskButtons>
        <Tray>
          <Triangle color="#fff" size={7} />
          <svg width="16" height="16" viewBox="0 0 16 16" fill="#fff"><path d="M3 1h1.500v14H3zM5 2h4l1 1.500h4.500L13 6l1 2.500H9.500L8.500 7H5z" /></svg>
          <svg width="16" height="16" viewBox="0 0 16 16" fill="#fff"><path d="M2 3h5v2H4v8h5v2H2zM8 1h1.500v3h2V1H13v3h2v3l-2 2.500V14H9v-1h2.500V9.500L7.500 7V4H8zM5 6h2v6H5z" /></svg>
          <svg width="16" height="16" viewBox="0 0 16 16" fill="#fff"><path d="M1 5.500h2.500L7.500 2v12l-4-3.500H1z" /><path d="M9.500 5.500q1.500 2.500 0 5M11.500 4q2.500 4 0 8M13.500 3q3 5 0 10" fill="none" stroke="#fff" /></svg>
          <svg width="16" height="16" viewBox="0 0 16 16" fill="#fff"><path d="M1 12h2v2H1zM4 10h2v4H4zM7 8h2v6H7zM10 5h2v9h-2zM13 2h2v12h-2z" /></svg>
          <Drive />
          <Clock>1:16 PM<br />5/5/2017</Clock>
          <ShowDesktop aria-label="Show desktop" />
        </Tray>
      </Taskbar>
    </Screen>
  );
}
